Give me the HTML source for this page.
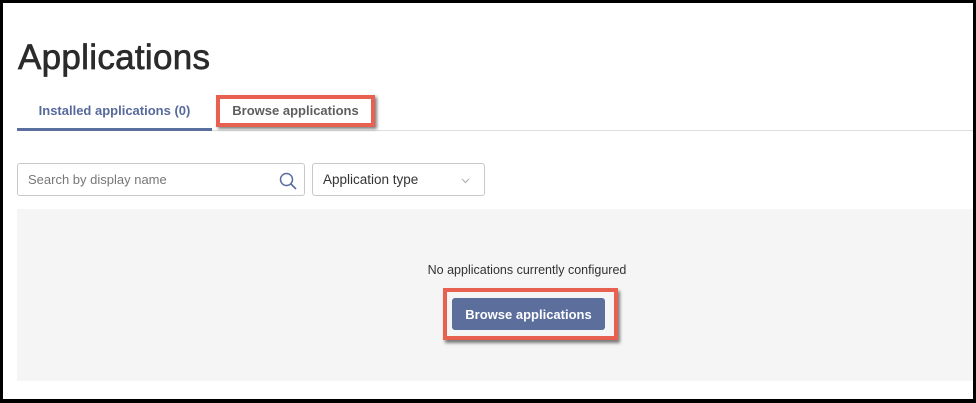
<!DOCTYPE html>
<html><head><meta charset="utf-8"><style>
*{box-sizing:border-box;margin:0;padding:0}
body{width:976px;height:403px;background:#000;position:relative;overflow:hidden;font-family:"Liberation Sans",sans-serif}
#f{position:absolute;left:3px;top:3px;width:970px;height:396px;background:#fff}
.a{position:absolute}
h1{position:absolute;left:15px;top:35px;font-size:35px;font-weight:normal;-webkit-text-stroke:0.7px #2b2b2b;color:#2b2b2b;letter-spacing:0.3px}
.tab1{left:14px;top:96px;width:195px;height:32px;border-bottom:3px solid #5a6e9f;color:#56699b;font-weight:bold;font-size:13px;text-align:center;line-height:23px}
.line{left:209px;top:127px;width:761px;height:1px;background:#ddd}
.hl1{left:213px;top:92px;width:159px;height:32px;border:4px solid #e8604f;box-shadow:2px 2px 3px rgba(0,0,0,.5);background:#fff;color:#5e5e5e;font-weight:bold;font-size:13px;text-align:center;line-height:24px}
.search{left:14px;top:160px;width:288px;height:33px;border:1px solid #c9c9c9;border-radius:3px;color:#777;font-size:13px;line-height:31px;padding-left:10px}
.sel{left:309px;top:160px;width:173px;height:33px;border:1px solid #c9c9c9;border-radius:3px;color:#333;font-size:13.5px;line-height:31px;padding-left:10px}
.panel{left:14px;top:206px;width:956px;height:172px;background:#f5f5f5}
.msg{left:0;top:260px;width:1048px;text-align:center;font-size:12.5px;color:#333}
.hl2{left:440px;top:285px;width:175px;height:52px;border:4px solid #e8604f;box-shadow:2px 3px 3px rgba(0,0,0,.5);background:#f5f5f5}
.btn{left:449px;top:295px;width:153px;height:32px;background:#5b6e9c;border-radius:3px;color:#fff;font-weight:bold;font-size:13px;text-align:center;line-height:33px}
</style></head><body>
<div id="f">
<h1>Applications</h1>
<div class="a tab1">Installed applications (0)</div>
<div class="a line"></div>
<div class="a hl1">Browse applications</div>
<div class="a search">Search by display name
<svg class="a" style="left:261px;top:8px" width="18" height="18" viewBox="0 0 18 18"><circle cx="7.5" cy="7.5" r="6" fill="none" stroke="#5a6e9f" stroke-width="1.5"/><line x1="12" y1="12" x2="17" y2="17" stroke="#5a6e9f" stroke-width="1.6"/></svg></div>
<div class="a sel">Application type
<svg class="a" style="left:148px;top:14px" width="9" height="6" viewBox="0 0 9 6"><path d="M1 1 L4.5 4.5 L8 1" fill="none" stroke="#aaa" stroke-width="1"/></svg></div>
<div class="a panel"></div>
<div class="a msg">No applications currently configured</div>
<div class="a hl2"></div>
<div class="a btn">Browse applications</div>
</div>
</body></html>
